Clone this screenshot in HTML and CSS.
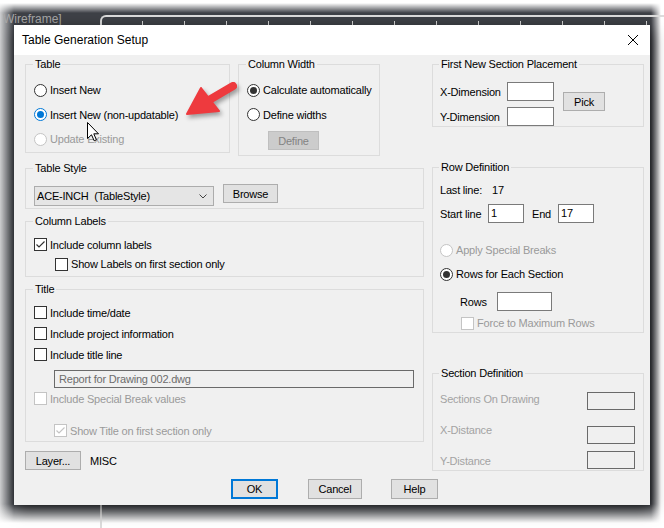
FILE: index.html
```html
<!DOCTYPE html>
<html lang="en">
<head>
    <meta charset="UTF-8">
    <meta name="viewport" content="width=device-width, initial-scale=1.0">
    <title>Table Generation Setup</title>
    <link rel="stylesheet" href="styles.css">
</head>
<body>
    <!-- CAD drawing area behind the dialog -->
    <span class="desktop-label">Wireframe]</span>
    <div class="viewport"><div class="ruler"></div></div>

    <div class="dialog">
        <div class="titlebar">
            <span class="title">Table Generation Setup</span>
            <svg class="close" viewBox="0 0 10 10"><path d="M0 0L10 10M10 0L0 10" stroke="#000" stroke-width="1"/></svg>
        </div>

        <div class="dialog-body">
            <div class="columns">
                <!-- Left column -->
                <div class="col-left">
                    <div class="row-top">
                        <fieldset class="group table-group">
                            <legend>Table</legend>
                            <div class="opt radio-row"><span class="radio"></span>Insert New</div>
                            <div class="opt radio-row"><span class="radio on focus"></span>Insert New (non-updatable)</div>
                            <div class="opt radio-row disabled"><span class="radio"></span>Update Existing</div>
                        </fieldset>
                        <fieldset class="group width-group">
                            <legend>Column Width</legend>
                            <div class="opt radio-row"><span class="radio on"></span>Calculate automatically</div>
                            <div class="opt radio-row"><span class="radio"></span>Define widths</div>
                            <button class="btn btn-define" disabled>Define</button>
                        </fieldset>
                    </div>

                    <fieldset class="group style-group">
                        <legend>Table Style</legend>
                        <div class="style-row">
                            <div class="select">
                                <span>ACE-INCH  (TableStyle)</span>
                                <svg class="chevron" viewBox="0 0 8 5"><path d="M0.5 0.5L4 4L7.5 0.5" fill="none" stroke="#444" stroke-width="1"/></svg>
                            </div>
                            <button class="btn btn-browse">Browse</button>
                        </div>
                    </fieldset>

                    <fieldset class="group labels-group">
                        <legend>Column Labels</legend>
                        <div class="opt check-row">
                            <span class="check"><svg viewBox="0 0 11 11"><path d="M1.5 5.5L4 8L9.5 2.5" fill="none" stroke="#333" stroke-width="1.2"/></svg></span>Include column labels
                        </div>
                        <div class="opt check-row indent"><span class="check"></span>Show Labels on first section only</div>
                    </fieldset>

                    <fieldset class="group title-group">
                        <legend>Title</legend>
                        <div class="opt title-row"><span class="check"></span>Include time/date</div>
                        <div class="opt title-row"><span class="check"></span>Include project information</div>
                        <div class="opt title-row"><span class="check"></span>Include title line</div>
                        <div class="textfield">Report for Drawing 002.dwg</div>
                        <div class="opt title-row disabled"><span class="check"></span>Include Special Break values</div>
                        <div class="opt show-title disabled">
                            <span class="check"><svg viewBox="0 0 11 11"><path d="M1.5 5.5L4 8L9.5 2.5" fill="none" stroke="#c4c4c4" stroke-width="1.2"/></svg></span>Show Title on first section only
                        </div>
                    </fieldset>

                    <div class="layer-row">
                        <button class="btn btn-layer">Layer...</button>
                        <span class="layer-name">MISC</span>
                    </div>
                </div>

                <!-- Right column -->
                <div class="col-right">
                    <fieldset class="group place-group">
                        <legend>First New Section Placement</legend>
                        <div class="place-grid">
                            <span class="place-label">X-Dimension</span>
                            <div class="input input-dim"></div>
                            <button class="btn btn-pick">Pick</button>
                            <span class="place-label">Y-Dimension</span>
                            <div class="input input-dim"></div>
                        </div>
                    </fieldset>

                    <fieldset class="group rowdef-group">
                        <legend>Row Definition</legend>
                        <div class="lastline">Last line:<span class="lastline-num">17</span></div>
                        <div class="start-row">
                            <span class="start-label">Start line</span>
                            <div class="input input-line">1</div>
                            <span class="end-label">End</span>
                            <div class="input input-line">17</div>
                        </div>
                        <div class="opt rowdef-radio apply-row disabled"><span class="radio"></span>Apply Special Breaks</div>
                        <div class="opt rowdef-radio"><span class="radio on"></span>Rows for Each Section</div>
                        <div class="rows-row">
                            <span class="rows-label">Rows</span>
                            <div class="input input-rows"></div>
                        </div>
                        <div class="opt force-row disabled"><span class="check"></span>Force to Maximum Rows</div>
                    </fieldset>

                    <fieldset class="group section-group">
                        <legend>Section Definition</legend>
                        <div class="sec-row">
                            <span class="sec-label">Sections On Drawing</span>
                            <div class="input input-sec"></div>
                        </div>
                        <div class="sec-row sec-x">
                            <span class="sec-label up">X-Distance</span>
                            <div class="input input-sec"></div>
                        </div>
                        <div class="sec-row sec-y">
                            <span class="sec-label down">Y-Distance</span>
                            <div class="input input-sec"></div>
                        </div>
                    </fieldset>
                </div>
            </div>

            <div class="actions">
                <button class="btn btn-ok">OK</button>
                <button class="btn btn-cancel">Cancel</button>
                <button class="btn btn-help">Help</button>
            </div>
        </div>
    </div>

    <!-- Annotation arrow and mouse pointer laid over the dialog -->
    <svg class="callout" viewBox="0 0 60 45">
        <path d="M30 21.5L53 8" stroke="#ee3a3e" stroke-width="8" stroke-linecap="round"/>
        <path d="M7 36L21 10L39 33Z" fill="#ee3a3e" stroke="#ee3a3e" stroke-width="2" stroke-linejoin="round"/>
    </svg>
    <svg class="pointer" viewBox="0 0 12 20">
        <path d="M0.5 0.5L0.5 16.5L4.5 12.8L7.2 18.8L9.4 17.8L6.8 11.8L11.5 11.8Z" fill="#fff" stroke="#000" stroke-width="1" stroke-linejoin="round"/>
    </svg>
</body>
</html>
```

FILE: styles.css
```css
* {
    box-sizing: border-box;
}

body {
    margin: 0;
    padding: 25px 0 0 14px;
    width: 664px;
    height: 528px;
    overflow: hidden;
    position: relative;
    font-family: "Liberation Sans", Arial, sans-serif;
    font-size: 11px;
    letter-spacing: -0.2px;
    color: #000;
    background:
        linear-gradient(to bottom, #fff 0, #fff 3px, rgba(255, 255, 255, 0) 13px),
        linear-gradient(to top, #fff 0, #fff 5px, rgba(255, 255, 255, 0) 24px),
        linear-gradient(to left, #fff 0, #fff 3px, rgba(255, 255, 255, 0) 13px),
        linear-gradient(to right, rgba(255, 255, 255, 0.75) 0, rgba(255, 255, 255, 0) 14px),
        #3e4147;
}

/* CAD background */
.desktop-label {
    position: absolute;
    left: 3px;
    top: 12px;
    font-size: 12px;
    letter-spacing: 0;
    color: #a8a8a8;
}

.viewport {
    position: absolute;
    left: 100px;
    top: 15px;
    right: -20px;
    bottom: -20px;
    border-top: 2px solid #dcdcdc;
    border-left: 2px solid #dcdcdc;
    border-top-left-radius: 6px;
}

.ruler {
    margin: 4px 0 0 40px;
    height: 4px;
    background: repeating-linear-gradient(to right, #d8d8d8 0 1px, transparent 1px 42px);
}

/* Dialog */
.dialog {
    position: relative;
    width: 636px;
    height: 480px;
    background: #f0f0f0;
    box-shadow: 2px 5px 14px rgba(0, 0, 0, 0.6);
}

.titlebar {
    height: 30px;
    background: #fff;
    display: flex;
    align-items: center;
    justify-content: space-between;
    padding: 0 12px 0 8px;
}

.title {
    font-size: 12px;
    letter-spacing: 0;
}

.close {
    width: 10px;
    height: 10px;
}

.dialog-body {
    padding: 2px 0 0 11px;
}

.columns {
    display: flex;
    gap: 8px;
}

.col-left {
    width: 399px;
    display: flex;
    flex-direction: column;
}

.col-right {
    width: 212px;
    display: flex;
    flex-direction: column;
}

.row-top {
    display: flex;
    align-items: flex-start;
    gap: 8px;
}

/* Group boxes */
.group {
    margin: 0;
    padding: 0 0 0 8px;
    border: 1px solid #dcdcdc;
    min-width: 0;
}

.group legend {
    padding: 0 2px;
    margin-left: -1px;
    line-height: 14px;
}

/* Radio buttons and check boxes */
.opt {
    display: flex;
    align-items: center;
    white-space: nowrap;
}

.radio,
.check {
    width: 13px;
    height: 13px;
    flex: none;
    margin-right: 3px;
    border: 1px solid #333;
    background: #fff;
    display: flex;
    align-items: center;
    justify-content: center;
}

.radio {
    border-radius: 50%;
}

.radio.on::after {
    content: "";
    width: 7px;
    height: 7px;
    border-radius: 50%;
    background: #333;
}

.radio.focus {
    border-color: #0078d7;
}

.radio.focus::after {
    background: #0078d7;
}

.check svg {
    width: 11px;
    height: 11px;
}

.disabled {
    color: #9a9a9a;
}

.disabled .radio,
.disabled .check {
    border-color: #c4c4c4;
}

/* Buttons and fields */
.btn {
    font-family: inherit;
    font-size: 11px;
    letter-spacing: -0.2px;
    color: #000;
    background: #e1e1e1;
    border: 1px solid #adadad;
    height: 19px;
    padding: 0;
    margin: 0;
}

.btn:disabled {
    background: #cccccc;
    border-color: #bfbfbf;
    color: #838383;
}

.input {
    background: #fff;
    border: 1px solid #7a7a7a;
    height: 19px;
    padding-left: 2px;
    line-height: 17px;
}

/* Table */
.table-group {
    width: 205px;
    padding-top: 7px;
}

.radio-row {
    height: 24.5px;
}

/* Column Width */
.width-group {
    width: 142px;
    padding-top: 7px;
    padding-bottom: 5px;
}

.btn-define {
    display: block;
    width: 51px;
    margin: 4px 0 0 21px;
}

/* Table Style */
.style-group {
    margin-top: 5px;
    padding-top: 9px;
    padding-bottom: 2px;
}

.style-row {
    display: flex;
    align-items: flex-start;
    gap: 9px;
}

.select {
    width: 180px;
    height: 20px;
    margin-top: 2px;
    background: #e5e5e5;
    border: 1px solid #acacac;
    display: flex;
    align-items: center;
    justify-content: space-between;
    padding: 0 6px 0 2px;
    white-space: pre;
}

.chevron {
    width: 8px;
    height: 5px;
}

.btn-browse {
    width: 55px;
}

/* Column Labels */
.labels-group {
    margin-top: 5px;
    padding-top: 7px;
    padding-bottom: 2px;
}

.check-row {
    height: 19.5px;
}

.indent {
    padding-left: 21px;
}

/* Title */
.title-group {
    margin-top: 5px;
    padding-top: 6px;
    padding-bottom: 1px;
}

.title-row {
    height: 21px;
}

.textfield {
    width: 360px;
    height: 18px;
    margin: 5px 0 0 20px;
    border: 1px solid #6a6a6a;
    background: #f0f0f0;
    color: #6d6d6d;
    padding-left: 4px;
    line-height: 16px;
}

.show-title {
    height: 19px;
    margin-top: 12px;
    padding-left: 20px;
}

.layer-row {
    margin-top: 9px;
    display: flex;
    align-items: center;
    gap: 9px;
}

.btn-layer {
    width: 56px;
}

/* First New Section Placement */
.place-group {
    padding: 11px 0 0 7px;
}

.place-grid {
    display: grid;
    grid-template-columns: 58px 47px 42px;
    grid-template-rows: 19px 19px;
    column-gap: 9px;
    row-gap: 6px;
    align-items: center;
}

.place-label {
    white-space: nowrap;
}

.btn-pick {
    grid-row: 1 / span 2;
    grid-column: 3;
    align-self: start;
    margin-top: 10px;
    width: 42px;
}

/* Row Definition */
.rowdef-group {
    margin-top: 33px;
    padding: 7px 0 0 7px;
}

.lastline {
    height: 18px;
    line-height: 18px;
}

.lastline-num {
    margin-left: 10px;
}

.start-row {
    margin-top: 5px;
    display: flex;
    align-items: center;
}

.start-label {
    width: 48px;
}

.end-label {
    width: 26px;
    margin-left: 8px;
}

.input-line {
    width: 36px;
}

.rowdef-radio {
    height: 24px;
}

.apply-row {
    margin-top: 15px;
}

.rows-row {
    margin-top: 6px;
    padding-left: 20px;
    display: flex;
    align-items: center;
}

.rows-label {
    width: 37px;
}

.input-rows {
    width: 55px;
}

.force-row {
    height: 18px;
    margin-top: 3px;
    padding-left: 21px;
}

/* Section Definition */
.section-group {
    margin-top: 33px;
    padding: 12px 8px 1px 7px;
}

.sec-row {
    display: flex;
    align-items: flex-start;
    justify-content: space-between;
    height: 18px;
}

.sec-x {
    margin-top: 16px;
}

.sec-y {
    margin-top: 7px;
}

.sec-label {
    color: #a3a3a3;
    line-height: 14px;
}

.sec-label.up {
    margin-top: -3px;
}

.sec-label.down {
    margin-top: 3px;
}

.input-sec {
    width: 48px;
    height: 18px;
    border-color: #6a6a6a;
    background: #f0f0f0;
}

/* Bottom buttons */
.actions {
    margin-top: 8px;
    padding-right: 6px;
    display: flex;
    justify-content: center;
}

.actions .btn {
    height: 20px;
}

.btn-ok {
    width: 47px;
    border: 2px solid #0078d7;
}

.btn-cancel {
    width: 54px;
    margin-left: 30px;
}

.btn-help {
    width: 47px;
    margin-left: 29px;
}

/* Overlays */
.callout {
    position: absolute;
    left: 180px;
    top: 78px;
    width: 60px;
    height: 45px;
    filter: drop-shadow(2px 3px 2px rgba(0, 0, 0, 0.35));
}

.pointer {
    position: absolute;
    left: 87px;
    top: 122px;
    width: 12px;
    height: 20px;
}
```
